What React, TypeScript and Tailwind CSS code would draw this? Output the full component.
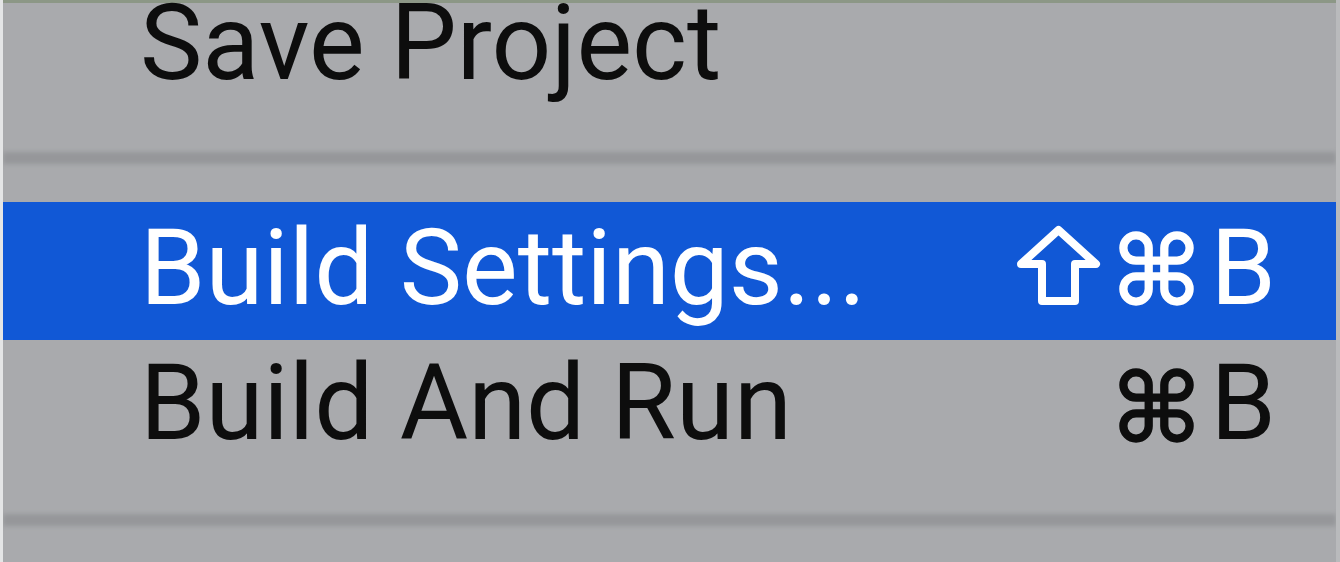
import React from "react";

function ShiftKey({ color }: { color: string }) {
  return (
    <svg viewBox="0 0 85 80" className="w-[85px] h-[80px] shrink-0" fill="none" stroke={color} strokeWidth={8} strokeLinejoin="round">
      <path d="M42.5 5 L80 39 H59 V76 H26 V39 H5 Z" />
    </svg>
  );
}

function CmdKey({ color }: { color: string }) {
  return (
    <svg viewBox="0 0 77 77" className="w-[77px] h-[75px] shrink-0" fill="none" stroke={color} strokeWidth={8.5}>
      <path d="M46.5 17.5 V59.5 A13 13 0 1 0 59.5 46.5 H17.5 A13 13 0 1 0 30.5 59.5 V17.5 A13 13 0 1 0 17.5 30.5 H59.5 A13 13 0 1 0 46.5 17.5" />
    </svg>
  );
}

function Separator() {
  return <div className="h-[12px] bg-[#96979a] blur-[2px]" />;
}

export default function App() {
  return (
    <div className="w-[1340px] h-[562px] overflow-hidden bg-[#a9aaad] font-['Roboto',sans-serif] text-[105px] text-[#0d0d0d] border-l-[3px] border-l-[#e4e5e6] border-r-[4px] border-r-[#b9babc]">
      <div className="h-[3px] bg-[#8c9786]" />
      <div className="pl-[137px] leading-[82px]">Save Project</div>
      <div className="pt-[67px] pb-[38px]">
        <Separator />
      </div>
      <div className="h-[138px] bg-[#1158d6] text-white flex items-start pl-[137px] pr-[60px] leading-[134px]">
        <span className="flex-1">Build Settings...</span>
        <div className="mt-[23px] shrink-0">
          <ShiftKey color="#ffffff" />
        </div>
        <div className="mt-[29px] ml-[17px] mr-[16px] shrink-0">
          <CmdKey color="#ffffff" />
        </div>
        <span>B</span>
      </div>
      <div className="h-[174px] flex items-start pl-[137px] pr-[60px] leading-[128px]">
        <span className="flex-1">Build And Run</span>
        <div className="mt-[28px] mr-[16px] shrink-0">
          <CmdKey color="#0d0d0d" />
        </div>
        <span>B</span>
      </div>
      <Separator />
    </div>
  );
}
